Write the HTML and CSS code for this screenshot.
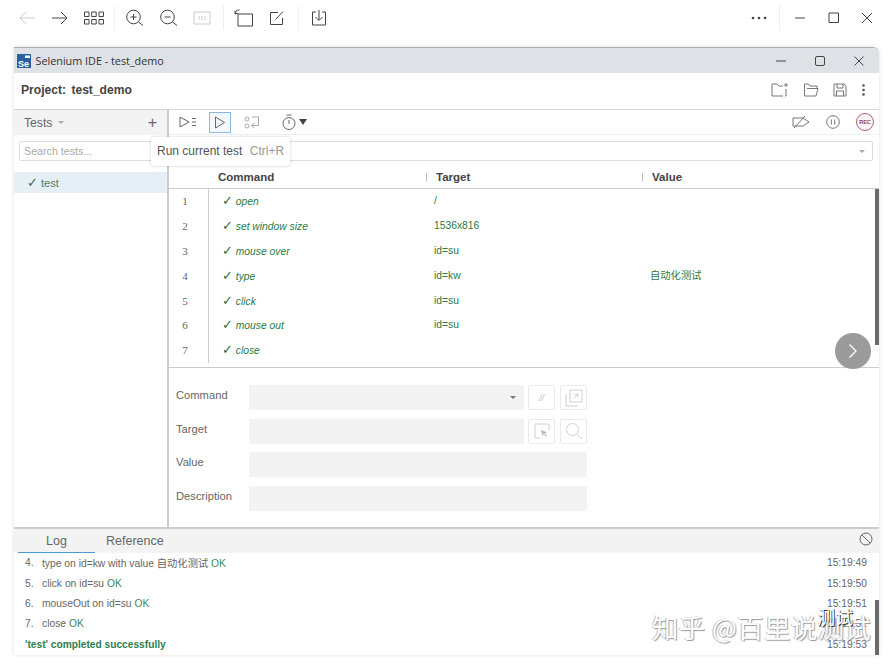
FILE: index.html
```html
<!DOCTYPE html>
<html lang="en">
<head>
<meta charset="utf-8">
<title>Selenium IDE - test_demo</title>
<link rel="stylesheet" href="styles.css">
</head>
<body>
<header class="viewer-bar">
  <button class="vb faded"><svg width="20" height="16" viewBox="0 0 20 16"><path d="M18 8H3M9 2 3 8l6 6"/></svg></button>
  <button class="vb"><svg width="20" height="16" viewBox="0 0 20 16"><path d="M2 8h15M11 2l6 6-6 6"/></svg></button>
  <button class="vb"><svg width="22" height="14" viewBox="0 0 22 14"><path d="M1.500 1h4.500v4.500H1.500zM8.700 1h4.500v4.500H8.700zM16 1h4.500v4.500H16zM1.500 8.500h4.500V13H1.500zM8.700 8.500h4.500V13H8.700zM16 8.500h4.500V13H16z"/></svg></button>
  <i class="vb-sep"></i>
  <button class="vb"><svg width="20" height="18" viewBox="0 0 20 18"><circle cx="8.500" cy="8" r="6.800"/><path d="M13.500 13l4.500 3.500M5.500 8h6M8.500 5v6"/></svg></button>
  <button class="vb"><svg width="20" height="18" viewBox="0 0 20 18"><circle cx="8.500" cy="8" r="6.800"/><path d="M13.500 13l4.500 3.500M5.500 8h6"/></svg></button>
  <button class="vb faded"><svg width="18" height="14" viewBox="0 0 18 14"><path d="M1 1h16v12H1zM6 5v4M9 5v4M12 5v4"/></svg></button>
  <i class="vb-sep"></i>
  <button class="vb"><svg width="20" height="18" viewBox="0 0 20 18"><path d="M4 5h14.500v12H4zM1 5l1-2.800q1-1.400 3.500-1.200M1 1.800 1.200 5l3-1"/></svg></button>
  <button class="vb"><svg width="16" height="16" viewBox="0 0 16 16"><path d="M13.500 8v6.500h-12v-12H9M6.500 9.500 14 1.500"/></svg></button>
  <i class="vb-sep"></i>
  <button class="vb"><svg width="16" height="16" viewBox="0 0 16 16"><path d="M5 2H1.500v13h13V2H11M8 0v10M4.500 7 8 10.500 11.500 7"/></svg></button>
  <div class="vb-spacer"></div>
  <button class="vb"><svg width="16" height="4" viewBox="0 0 16 4"><circle class="solid" cx="2" cy="2" r="1.300"/><circle class="solid" cx="8" cy="2" r="1.300"/><circle class="solid" cx="14" cy="2" r="1.300"/></svg></button>
  <i class="vb-sep"></i>
  <button class="vb"><svg width="12" height="2" viewBox="0 0 12 2"><path d="M1 1h10"/></svg></button>
  <button class="vb"><svg width="12" height="12" viewBox="0 0 12 12"><path d="M1 1h9.500v9.500H1z"/></svg></button>
  <button class="vb"><svg width="12" height="12" viewBox="0 0 12 12"><path d="M1 1l10 10M11 1 1 11"/></svg></button>
</header>

<main class="window">
  <div class="titlebar">
    <svg class="logo" width="14" height="14" viewBox="0 0 14 14"><rect width="14" height="14" fill="#2a5f9e"/><rect x="8" y="1.500" width="5" height="2.500" fill="#fff"/><text x="1" y="12.500" class="logo-text">Se</text></svg>
    <span class="title-text">Selenium IDE - test_demo</span>
    <div class="win-controls">
      <svg width="10" height="2" viewBox="0 0 10 2"><path d="M0 1h10"/></svg>
      <svg width="10" height="10" viewBox="0 0 10 10"><rect x=".5" y=".5" width="9" height="9" rx="1.500"/></svg>
      <svg width="10" height="10" viewBox="0 0 10 10"><path d="M.5.500l9 9M9.500.500l-9 9"/></svg>
    </div>
  </div>

  <div class="project">
    <span class="project-name"><b>Project:</b> test_demo</span>
    <div class="project-tools">
      <svg width="18" height="14" viewBox="0 0 18 14"><path d="M12 13H1V1h5l2 2h4M15 6v7h-1M15 0v4M13 2h4"/></svg>
      <svg width="16" height="14" viewBox="0 0 16 14"><path d="M1.500 13V1h4l1.500 2h7v2M4 5.500h11L13 13H1.500"/></svg>
      <svg width="14" height="14" viewBox="0 0 14 14"><path d="M1 1h10l2 2v10H1zM4 1v4h6V1M3.500 13V8h7v5"/></svg>
      <svg class="kebab" width="3" height="12" viewBox="0 0 3 12"><circle cx="1.500" cy="1.500" r="1.300"/><circle cx="1.500" cy="6" r="1.300"/><circle cx="1.500" cy="10.500" r="1.300"/></svg>
    </div>
  </div>

  <div class="workspace">
    <aside class="sidebar">
      <div class="side-head"><span class="side-title">Tests</span><span class="mini-caret"></span><span class="plus">+</span></div>
      <div class="side-search"><div class="search-box">Search tests...</div></div>
      <div class="test-item"><span class="tick">✓</span> test</div>
    </aside>

    <section class="main">
      <div class="run-bar">
        <button class="rb"><svg width="18" height="12" viewBox="0 0 18 12"><path d="M1 1v10l9-5zM13 2.500h4M13 6h4M13 9.500h4"/></svg></button>
        <button class="rb active"><svg width="12" height="13" viewBox="0 0 12 13"><path d="M1.500 1v11l9-5.500z"/></svg></button>
        <button class="rb faded"><svg width="16" height="13" viewBox="0 0 16 13"><circle cx="3" cy="3" r="2"/><circle cx="3" cy="10" r="2"/><path d="M8 1h6.500v8.500H8M10.500 7l-3 2.500 3 2.500"/></svg></button>
        <button class="rb speed"><svg width="14" height="16" viewBox="0 0 14 16"><path d="M4.500 1h5M7 10V6"/><circle cx="7" cy="9.500" r="6"/></svg><span class="speed-caret"></span></button>
        <div class="run-right">
          <svg width="18" height="14" viewBox="0 0 18 14"><path d="M1 3h10l6 4-6 4H1zM2 13 13 1"/></svg>
          <svg width="14" height="14" viewBox="0 0 14 14"><circle cx="7" cy="7" r="6.300"/><path d="M5.300 4.500v5M8.700 4.500v5"/></svg>
          <div class="rec">REC</div>
        </div>
      </div>
      <div class="url-row"><div class="url-box"><span class="mini-caret"></span></div></div>

      <div class="table">
        <div class="thead">
          <span class="th th-cmd">Command</span>
          <span class="th th-target">Target</span>
          <span class="th th-value">Value</span>
        </div>
        <div class="tbody">
          <div class="tr"><span class="num">1</span><span class="cmd"><b>✓</b> open</span><span class="cell">/</span><span class="cell"></span></div>
          <div class="tr"><span class="num">2</span><span class="cmd"><b>✓</b> set window size</span><span class="cell">1536x816</span><span class="cell"></span></div>
          <div class="tr"><span class="num">3</span><span class="cmd"><b>✓</b> mouse over</span><span class="cell">id=su</span><span class="cell"></span></div>
          <div class="tr"><span class="num">4</span><span class="cmd"><b>✓</b> type</span><span class="cell">id=kw</span><span class="cell">自动化测试</span></div>
          <div class="tr"><span class="num">5</span><span class="cmd"><b>✓</b> click</span><span class="cell">id=su</span><span class="cell"></span></div>
          <div class="tr"><span class="num">6</span><span class="cmd"><b>✓</b> mouse out</span><span class="cell">id=su</span><span class="cell"></span></div>
          <div class="tr"><span class="num">7</span><span class="cmd"><b>✓</b> close</span><span class="cell"></span><span class="cell"></span></div>
          <div class="scroll table-scroll"></div>
          <div class="fab"><svg width="10" height="16" viewBox="0 0 10 16"><path d="M1.500 1.500 8 8l-6.500 6.500"/></svg></div>
        </div>
      </div>

      <form class="editor">
        <div class="f-row">
          <span class="f-label">Command</span>
          <div class="f-input narrow"><span class="mini-caret dark"></span></div>
          <div class="f-btn"><span class="slashes">//</span></div>
          <div class="f-btn"><svg width="18" height="18" viewBox="0 0 18 18"><path d="M5 1h12v12H5zM1 5v12h12M8.500 9.500 13 5M9.500 5H13v3.500"/></svg></div>
        </div>
        <div class="f-row">
          <span class="f-label">Target</span>
          <div class="f-input narrow"></div>
          <div class="f-btn"><svg width="16" height="16" viewBox="0 0 16 16"><path d="M6 15H1V1h14v6"/><path class="fill" d="M7 7l6 2.200-2.300 1.100 2.300 2.700-1 .8-2.200-2.700L8.500 13z"/></svg></div>
          <div class="f-btn"><svg width="18" height="18" viewBox="0 0 18 18"><circle cx="7.500" cy="7.500" r="6"/><path d="M12 12l5 5"/></svg></div>
        </div>
        <div class="f-row"><span class="f-label">Value</span><div class="f-input wide"></div></div>
        <div class="f-row"><span class="f-label">Description</span><div class="f-input wide"></div></div>
      </form>
    </section>
  </div>

  <section class="console">
    <div class="tabs">
      <span class="tab tab-on">Log</span>
      <span class="tab">Reference</span>
      <svg class="clear" width="14" height="14" viewBox="0 0 14 14"><circle cx="7" cy="7" r="6"/><path d="M2.800 2.800l8.400 8.400"/></svg>
    </div>
    <div class="log">
      <div class="log-row first"><span class="log-n">4.</span><span class="log-msg">type on id=kw with value 自动化测试 <em>OK</em></span><time>15:19:49</time></div>
      <div class="log-row"><span class="log-n">5.</span><span class="log-msg">click on id=su <em>OK</em></span><time>15:19:50</time></div>
      <div class="log-row"><span class="log-n">6.</span><span class="log-msg">mouseOut on id=su <em>OK</em></span><time>15:19:51</time></div>
      <div class="log-row"><span class="log-n">7.</span><span class="log-msg">close <em>OK</em></span><time>15:19:52</time></div>
      <div class="log-row"><span class="log-done">'test' completed successfully</span><time>15:19:53</time></div>
      <div class="scroll log-scroll"></div>
    </div>
  </section>

  <div class="tooltip">Run current test <span class="shortcut">Ctrl+R</span></div>
</main>

<div class="watermark">知乎 @百里说测试</div>
<div class="watermark-small">测试</div>
</body>
</html>
```
FILE: styles.css
```css
* { box-sizing: border-box; }
html, body { margin: 0; height: 665px; overflow: hidden; }
body {
  position: relative;
  background: #fff;
  font-family: "Liberation Sans", "Noto Sans CJK SC", sans-serif;
  color: #555;
}
button { padding: 0; border: 0; background: none; font: inherit; }
svg { fill: none; stroke: #555; stroke-width: 1; display: block; }

.viewer-bar { height: 47px; padding: 0 8px 11px 10px; display: flex; align-items: center; }
.vb { width: 33.500px; height: 24px; display: flex; align-items: center; justify-content: center; flex: none; }
.vb svg { stroke: #444; }
.vb svg .solid { fill: #444; stroke: none; }
.vb.faded svg { stroke: #ccc; }
.vb-sep { width: 1px; height: 24px; margin: 0 3.500px; background: #eee; flex: none; }
.vb-spacer { flex: 1; }

.window {
  position: relative;
  width: 865px;
  height: 608px;
  margin-left: 14px;
  border-top: 1px solid #a9adb1;
  border-radius: 0 6px 0 0;
  box-shadow: 0 0 4px rgba(0,0,0,.13);
  display: flex;
  flex-direction: column;
  background: #fff;
}
.titlebar {
  height: 25px;
  background: #dee1e6;
  border-radius: 0 6px 0 0;
  padding-left: 3px;
  display: flex;
  align-items: center;
  flex: none;
}
.logo { stroke: none; }
.logo-text { font: bold 9px "Liberation Sans", sans-serif; fill: #fff; stroke: none; }
.title-text { margin-left: 4.500px; font: 10.800px "Open Sans", sans-serif; color: #333; }
.win-controls { margin-left: auto; padding-right: 15px; display: flex; align-items: center; gap: 29px; }
.win-controls svg { stroke: #444; }

.project {
  height: 37px;
  padding: 0 14px 2px 7px;
  display: flex;
  align-items: center;
  justify-content: space-between;
  border-bottom: 1px solid #d4d4d4;
  flex: none;
}
.project-name { font-size: 12.100px; font-weight: bold; color: #444; word-spacing: 2px; }
.project-name b { font-weight: bold; }
.project-tools { display: flex; align-items: center; gap: 14px; }
.project-tools svg { stroke: #777; }
.project-tools .kebab { fill: #555; stroke: none; margin-left: 1px; }

.workspace { height: 419px; display: flex; border-bottom: 2px solid #ccc; flex: none; }
.sidebar { width: 155px; border-right: 2px solid #ccc; flex: none; }
.side-head {
  height: 25px;
  background: #f3f3f3;
  padding: 0 10px;
  display: flex;
  align-items: center;
  font-size: 12.200px;
}
.side-title { color: #666; }
.side-head .mini-caret { margin-left: 6px; }
.plus { margin-left: auto; font-size: 16px; color: #666; line-height: 1; }
.mini-caret {
  display: inline-block;
  width: 0;
  height: 0;
  border: 3.500px solid transparent;
  border-top: 3.500px solid #aaa;
  border-bottom: 0;
}
.mini-caret.dark { border-top-color: #777; }
.side-search { padding: 6px 5px 0; height: 37px; }
.search-box {
  height: 20px;
  border: 1px solid #ddd;
  border-radius: 2px;
  padding: 3px 4px;
  font-size: 10.700px;
  color: #aaa;
  line-height: 12px;
}
.test-item {
  height: 21px;
  background: #e6eef6;
  padding-left: 13px;
  font-size: 11px;
  line-height: 21px;
  color: #4f7d63;
}
.tick { font-family: "DejaVu Sans", sans-serif; color: #2c6e49; font-size: 13px; }

.main { flex: 1; min-width: 0; display: flex; flex-direction: column; }
.run-bar { height: 25px; display: flex; align-items: center; padding: 0 5px 0 3px; border-bottom: 1px solid #f0f0f0; }
.rb { width: 22px; height: 21px; margin-right: 11px; display: flex; align-items: center; justify-content: center; flex: none; }
.rb svg { stroke: #666; }
.rb:first-child { margin-left: 4px; margin-right: 10px; width: 24px; }
.rb.active { border: 1px solid #8db8de; background: #f4f8fc; margin-left: -1px; margin-right: 10px; }
.rb.faded svg { stroke: #aaa; }
.rb.speed { width: 30px; margin-left: 5px; gap: 3px; }
.speed-caret { width: 0; height: 0; border: 4px solid transparent; border-top: 6px solid #444; border-bottom: 0; }
.run-right { margin-left: auto; display: flex; align-items: center; gap: 16px; }
.run-right svg { stroke: #777; }
.rec {
  width: 18px;
  height: 18px;
  border: 1px solid #b5616f;
  border-radius: 50%;
  font-size: 5.500px;
  font-weight: bold;
  color: #a33a4a;
  text-align: center;
  line-height: 16px;
  background: #fdf6f7;
}
.url-row { height: 31px; padding: 6px 6px 4px 5px; }
.url-box {
  height: 20px;
  border: 1px solid #ddd;
  border-radius: 2px;
  display: flex;
  align-items: center;
  justify-content: flex-end;
  padding-right: 7px;
}

.table { height: 202px; display: flex; flex-direction: column; border-bottom: 1px solid #ccc; flex: none; }
.thead {
  height: 23px;
  display: grid;
  grid-template-columns: 257px 216px 1fr;
  border-bottom: 1px solid #ccc;
  font-size: 11.500px;
  font-weight: bold;
  color: #444;
  line-height: 22px;
  flex: none;
}
.th-cmd { padding-left: 49px; }
.th-target, .th-value { padding-left: 10px; position: relative; }
.th-target::before, .th-value::before { content: ""; position: absolute; left: 0; top: 7px; height: 8px; width: 1px; background: #bbb; }
.tbody { position: relative; flex: 1; }
.tr {
  height: 24.900px;
  display: grid;
  grid-template-columns: 40px 225px 216px 1fr;
  font-size: 10.300px;
  line-height: 24px;
  color: #2c7a3f;
}
.num { border-right: 1px solid #ccc; text-align: center; color: #666; padding-right: 7px; font-family: "Liberation Serif", serif; font-size: 11px; }
.cmd { padding-left: 13px; padding-top: 1px; font-style: italic; }
.cmd b { font: normal 13px "DejaVu Sans", sans-serif; color: #2a6a38; }
.scroll { position: absolute; right: 0; width: 4px; background: #6b6b6b; }
.table-scroll { top: 0; height: 156px; }
.fab {
  position: absolute;
  right: 8px;
  top: 144px;
  width: 36px;
  height: 36px;
  border-radius: 50%;
  background: #9b9b9b;
  display: flex;
  align-items: center;
  justify-content: center;
}
.fab svg { stroke: #fff; stroke-width: 1.300; }

.editor { padding-top: 17px; padding-left: 7px; display: flex; flex-direction: column; gap: 8.700px; }
.f-row { height: 25px; display: flex; align-items: center; }
.f-label { width: 73px; font-size: 11.200px; color: #666; padding-bottom: 5px; flex: none; }
.f-input { height: 25px; background: #f3f3f3; }
.f-input.narrow { width: 275px; display: flex; align-items: center; justify-content: flex-end; padding-right: 8px; margin-right: 4px; }
.f-input.wide { width: 338px; }
.f-btn {
  width: 27px;
  height: 25px;
  margin-right: 5px;
  border: 1px solid #eaeaea;
  border-radius: 2px;
  display: flex;
  align-items: center;
  justify-content: center;
}
.f-btn svg { stroke: #d0d0d0; }
.f-btn .fill { fill: #bbb; stroke: none; }
.slashes { font-size: 9px; font-style: italic; color: #bbb; }

.console { flex: 1; display: flex; flex-direction: column; min-height: 0; }
.tabs { height: 24px; background: #f3f3f3; display: flex; align-items: flex-end; padding-left: 4px; position: relative; flex: none; }
.tab { font-size: 12.500px; color: #666; height: 24px; line-height: 24px; text-align: center; width: 77px; margin-right: 11px; }
.tab:nth-child(2) { width: auto; }
.tab-on { border-bottom: 1px solid #4a9ad4; line-height: 25px; }
.clear { position: absolute; right: 6px; top: 3px; stroke: #666; }
.log { position: relative; flex: 1; overflow: hidden; font-size: 10.300px; color: #666; }
.log-row { height: 20.400px; padding: 0 12px 0 11px; display: flex; align-items: center; }
.log-row.first { margin-top: -0.500px; }
.log-n { width: 17px; flex: none; }
.log-msg em { font-style: normal; color: #3f8a5c; }
.log-done { font-weight: bold; color: #2f7d4f; font-size: 10.200px; }
time { margin-left: auto; color: #666; }
.log-scroll { bottom: 0; height: 55px; }

.tooltip {
  position: absolute;
  left: 137px;
  top: 89px;
  width: 139px;
  height: 29px;
  background: #fff;
  border-radius: 3px;
  box-shadow: 0 0 3px rgba(0,0,0,.22);
  font-size: 12px;
  line-height: 29px;
  padding-left: 6px;
  color: #555;
  white-space: nowrap;
}
.shortcut { color: #999; margin-left: 4px; }

.watermark {
  position: absolute;
  left: 652px;
  top: 612px;
  font: 26.300px "Noto Sans CJK SC", sans-serif;
  color: #fff;
  line-height: 30px;
  text-shadow: 1px 1px 1px #999, -1px 0 1px #bbb;
  white-space: nowrap;
  letter-spacing: 0.500px;
}
.watermark-small {
  position: absolute;
  left: 817px;
  top: 606px;
  font: 18px "Noto Sans CJK SC", sans-serif;
  color: #fff;
  line-height: 20px;
  text-shadow: 1px 1px 0 #333;
}
```
